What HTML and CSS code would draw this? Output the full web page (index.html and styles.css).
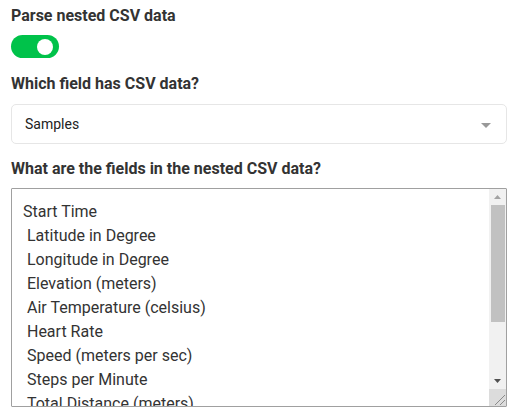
FILE: index.html
```html
<!DOCTYPE html>
<html>
<head>
<meta charset="utf-8">
<link rel="stylesheet" href="styles.css">
</head>
<body>
<div class="form">
  <div class="label">Parse nested CSV data</div>
  <div class="toggle"><span class="knob"></span></div>
  <div class="label">Which field has CSV data?</div>
  <div class="select"><span>Samples</span><span class="arrow"></span></div>
  <div class="label">What are the fields in the nested CSV data?</div>
  <div class="areabox">
    <textarea class="area">Start Time
 Latitude in Degree
 Longitude in Degree
 Elevation (meters)
 Air Temperature (celsius)
 Heart Rate
 Speed (meters per sec)
 Steps per Minute
 Total Distance (meters)
 Cadence
 Power (watts)
 Left Right Balance</textarea>
    <div class="sbar">
      <div class="sbtn"><svg width="17" height="16" viewBox="0 0 17 16"><polygon points="5,10 12,10 8.5,6" fill="#a3a3a3"/></svg></div>
      <div class="strack"><div class="sthumb"></div></div>
      <div class="sbtn"><svg width="17" height="16" viewBox="0 0 17 16"><polygon points="5,6 12,6 8.5,10" fill="#505050"/></svg></div>
      <div class="sgrip"><svg width="17" height="17" viewBox="0 0 17 17"><path d="M6 16 L16 6 M11 16 L16 11" stroke="#8a8a8a" stroke-width="1"/></svg></div>
    </div>
  </div>
</div>
</body>
</html>
```

FILE: styles.css
```css
html, body {
  margin: 0;
  padding: 0;
  background: #fff;
}
.form {
  padding: 6px 9px 0 11px;
  display: flex;
  flex-direction: column;
  font-family: Roboto, "Liberation Sans", sans-serif;
  color: #333;
}
.label {
  font-weight: bold;
  font-size: 16px;
  line-height: 20px;
  color: #333;
}
.toggle {
  margin-top: 9px;
  width: 48px;
  height: 23px;
  border-radius: 12px;
  background: #00c24a;
  display: flex;
  align-items: center;
  justify-content: flex-end;
  padding-right: 6px;
  box-sizing: border-box;
  margin-bottom: 16px;
}
.knob {
  width: 16px;
  height: 16px;
  border-radius: 50%;
  background: #fff;
}
.select {
  margin-top: 10px;
  height: 40px;
  box-sizing: border-box;
  border: 1px solid #e6e6e6;
  border-radius: 5px;
  display: flex;
  align-items: center;
  justify-content: space-between;
  padding: 0 15px 0 13px;
  font-size: 14px;
  color: #222;
  margin-bottom: 15px;
}
.arrow {
  width: 0;
  height: 0;
  border-left: 5px solid transparent;
  border-right: 5px solid transparent;
  border-top: 5px solid #999;
  margin-top: 2px;
}
.areabox {
  margin-top: 9px;
  height: 219px;
  box-sizing: border-box;
  border: 1px solid #a0a0a0;
  border-radius: 1px;
  display: flex;
}
.area {
  flex: 1;
  min-width: 0;
  border: none;
  outline: none;
  margin: 0;
  padding: 11px 11px 0 11px;
  font-family: Roboto, "Liberation Sans", sans-serif;
  font-size: 16px;
  line-height: 24px;
  color: #333;
  resize: none;
  overflow: hidden;
  background: #fff;
}
.sbar {
  width: 17px;
  display: flex;
  flex-direction: column;
  background: #f1f1f1;
}
.sbtn {
  height: 16px;
  display: flex;
}
.strack {
  flex: 1;
  padding: 0 1px 0 2px;
}
.sthumb {
  height: 117px;
  background: #c1c1c1;
}
.sgrip {
  height: 17px;
  background: #dcdcdc;
  display: flex;
}
```
